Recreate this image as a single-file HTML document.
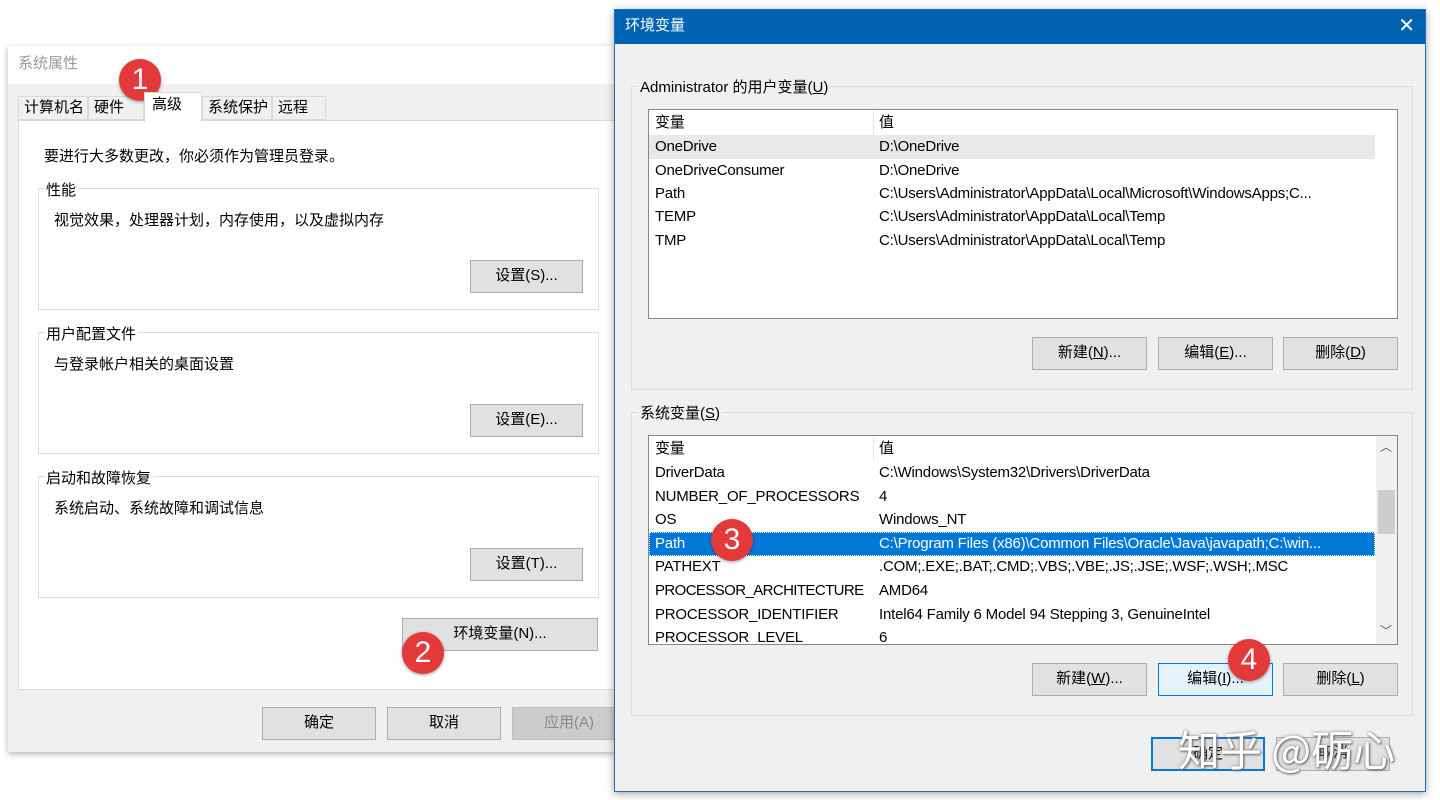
<!DOCTYPE html>
<html><head><meta charset="utf-8"><style>
*{box-sizing:border-box;margin:0;padding:0}
body{width:1440px;height:800px;background:#fff;position:relative;overflow:hidden;font-family:"Liberation Sans","Microsoft YaHei","Noto Sans CJK SC",sans-serif;font-size:15px;color:#000}
.a{position:absolute}
.btn{position:absolute;background:#e1e1e1;border:1px solid #adadad;text-align:center;font-size:15px;line-height:30px;color:#000}
.grp{position:absolute;border:1px solid #dcdcdc}
.lbl{position:absolute;background:inherit;padding:0 2px;font-size:15px}
.row{position:absolute;left:0;right:22px;height:24px;line-height:24px;font-size:15px;letter-spacing:-0.2px}
.row span{position:absolute;left:6px;white-space:nowrap}
.row b{font-weight:normal;position:absolute;left:230px;white-space:nowrap}
.num{position:absolute;width:42px;height:42px;border-radius:50%;background:#e23a3a;color:#fff;font-size:30px;text-align:center;line-height:42px;box-shadow:0 1px 3px rgba(0,0,0,.4)}
.tab{position:absolute;top:50px;height:24px;border:1px solid #d9d9d9;background:#f0f0f0;font-size:15px;line-height:22px;padding-left:5px;white-space:nowrap}
</style></head><body>
<!-- left dialog -->
<div class="a" style="left:8px;top:46px;width:612px;height:706px;background:#f0f0f0;box-shadow:0 2px 6px rgba(0,0,0,.3)">
 <div class="a" style="left:0;top:0;width:612px;height:38px;background:#fff;color:#999;font-size:15px;line-height:36px;padding-left:10px">系统属性</div>
 <div class="tab" style="left:10px;width:70px">计算机名</div>
 <div class="tab" style="left:80px;width:56px">硬件</div>
 <div class="a" style="left:136px;top:46px;height:30px;border:1px solid #d9d9d9;border-bottom:none;background:#fff;width:58px;line-height:24px;padding-left:7px;z-index:2">高级</div>
 <div class="tab" style="left:194px;width:70px">系统保护</div>
 <div class="tab" style="left:264px;width:54px">远程</div>
 <div class="a" style="left:10px;top:74px;width:602px;height:570px;background:#fff;border:1px solid #d9d9d9">
  <div class="a" style="left:25px;top:24px">要进行大多数更改，你必须作为管理员登录。</div>
  <div class="grp" style="left:19px;top:67px;width:561px;height:122px;background:#fff"><div class="lbl" style="left:5px;top:-10px">性能</div>
   <div class="a" style="left:15px;top:20px">视觉效果，处理器计划，内存使用，以及虚拟内存</div>
   <div class="btn" style="left:431px;top:71px;width:113px;height:33px">设置(S)...</div></div>
  <div class="grp" style="left:19px;top:211px;width:561px;height:122px;background:#fff"><div class="lbl" style="left:5px;top:-10px">用户配置文件</div>
   <div class="a" style="left:15px;top:20px">与登录帐户相关的桌面设置</div>
   <div class="btn" style="left:431px;top:71px;width:113px;height:33px">设置(E)...</div></div>
  <div class="grp" style="left:19px;top:355px;width:561px;height:122px;background:#fff"><div class="lbl" style="left:5px;top:-10px">启动和故障恢复</div>
   <div class="a" style="left:15px;top:20px">系统启动、系统故障和调试信息</div>
   <div class="btn" style="left:431px;top:71px;width:113px;height:33px">设置(T)...</div></div>
  <div class="btn" style="left:383px;top:497px;width:196px;height:33px">环境变量(N)...</div>
 </div>
 <div class="btn" style="left:254px;top:661px;width:114px;height:33px">确定</div>
 <div class="btn" style="left:379px;top:661px;width:114px;height:33px">取消</div>
 <div class="btn" style="left:504px;top:661px;width:114px;height:33px;color:#888;background:#ccc;border-color:#bfbfbf">应用(A)</div>
</div>
<!-- right dialog -->
<div class="a" style="left:614px;top:9px;width:812px;height:783px;background:#f0f0f0;border:1px solid #1a6fc0;box-shadow:0 2px 8px rgba(0,0,0,.35)">
 <div class="a" style="left:0;top:0;width:810px;height:34px;background:#0063b1;color:#fff;line-height:32px;padding-left:10px;font-size:15px">环境变量<span class="a" style="right:10px;top:0;font-size:20px">✕</span></div>
 <div class="grp" style="left:16px;top:76px;width:782px;height:304px;background:#f0f0f0"><div class="lbl" style="left:6px;top:-11px;font-size:15px">Administrator 的用户变量(<u>U</u>)</div>
  <div class="a" style="left:16px;top:22px;width:750px;height:210px;background:#fff;border:1px solid #828790">
   <div class="row" style="top:1px"><span>变量</span><b>值</b><i class="a" style="left:224px;top:0;width:1px;height:24px;background:#e5e5e5"></i></div>
   <div class="row" style="top:25px;background:#e8e8e8"><span>OneDrive</span><b>D:\OneDrive</b></div>
   <div class="row" style="top:49px"><span>OneDriveConsumer</span><b>D:\OneDrive</b></div>
   <div class="row" style="top:72px"><span>Path</span><b>C:\Users\Administrator\AppData\Local\Microsoft\WindowsApps;C...</b></div>
   <div class="row" style="top:95px"><span>TEMP</span><b>C:\Users\Administrator\AppData\Local\Temp</b></div>
   <div class="row" style="top:119px"><span>TMP</span><b>C:\Users\Administrator\AppData\Local\Temp</b></div>
  </div>
  <div class="btn" style="left:400px;top:250px;width:115px;height:33px">新建(<u>N</u>)...</div>
  <div class="btn" style="left:526px;top:250px;width:115px;height:33px">编辑(<u>E</u>)...</div>
  <div class="btn" style="left:651px;top:250px;width:115px;height:33px">删除(<u>D</u>)</div>
 </div>
 <div class="grp" style="left:16px;top:402px;width:782px;height:304px;background:#f0f0f0"><div class="lbl" style="left:6px;top:-11px;font-size:15px">系统变量(<u>S</u>)</div>
  <div class="a" style="left:16px;top:22px;width:750px;height:210px;background:#fff;border:1px solid #828790;overflow:hidden">
   <div class="row" style="top:1px"><span>变量</span><b>值</b><i class="a" style="left:224px;top:0;width:1px;height:24px;background:#e5e5e5"></i></div>
   <div class="row" style="top:25px"><span>DriverData</span><b>C:\Windows\System32\Drivers\DriverData</b></div>
   <div class="row" style="top:49px"><span>NUMBER_OF_PROCESSORS</span><b>4</b></div>
   <div class="row" style="top:72px"><span>OS</span><b>Windows_NT</b></div>
   <div class="row" style="top:96px;background:#0078d7;color:#fff;outline:1px dotted #fff;outline-offset:-1px"><span>Path</span><b>C:\Program Files (x86)\Common Files\Oracle\Java\javapath;C:\win...</b></div>
   <div class="row" style="top:119px"><span>PATHEXT</span><b>.COM;.EXE;.BAT;.CMD;.VBS;.VBE;.JS;.JSE;.WSF;.WSH;.MSC</b></div>
   <div class="row" style="top:143px"><span style="letter-spacing:-0.6px">PROCESSOR_ARCHITECTURE</span><b>AMD64</b></div>
   <div class="row" style="top:167px"><span>PROCESSOR_IDENTIFIER</span><b>Intel64 Family 6 Model 94 Stepping 3, GenuineIntel</b></div>
   <div class="row" style="top:190px"><span>PROCESSOR_LEVEL</span><b>6</b></div>
   <div class="a" style="right:0;top:0;width:21px;height:208px;background:#f0f0f0">
    <div class="a" style="left:4px;top:2px;font-size:12px;color:#555">︿</div>
    <div class="a" style="left:2px;top:54px;width:17px;height:44px;background:#cdcdcd"></div>
    <div class="a" style="left:4px;top:186px;font-size:12px;color:#555">﹀</div>
   </div>
  </div>
  <div class="btn" style="left:400px;top:250px;width:115px;height:33px">新建(<u>W</u>)...</div>
  <div class="btn" style="left:526px;top:250px;width:115px;height:33px;background:#e5f1fb;border-color:#0078d7">编辑(<u>I</u>)...</div>
  <div class="btn" style="left:651px;top:250px;width:115px;height:33px">删除(<u>L</u>)</div>
 </div>
 <div class="btn" style="left:536px;top:727px;width:114px;height:34px;border:2px solid #0078d7">确定</div>
 <div class="btn" style="left:661px;top:727px;width:114px;height:34px">取消</div>
</div>
<div class="a" style="left:1178px;top:718px;font-size:42px;color:#fff;text-shadow:1px 1px 2px #666,0 0 3px #888;font-family:'Noto Sans CJK SC',sans-serif">知乎 @砺心</div>
<div class="num" style="left:119px;top:59px">1</div>
<div class="num" style="left:402px;top:632px">2</div>
<div class="num" style="left:711px;top:519px">3</div>
<div class="num" style="left:1228px;top:639px">4</div>
</body></html>
